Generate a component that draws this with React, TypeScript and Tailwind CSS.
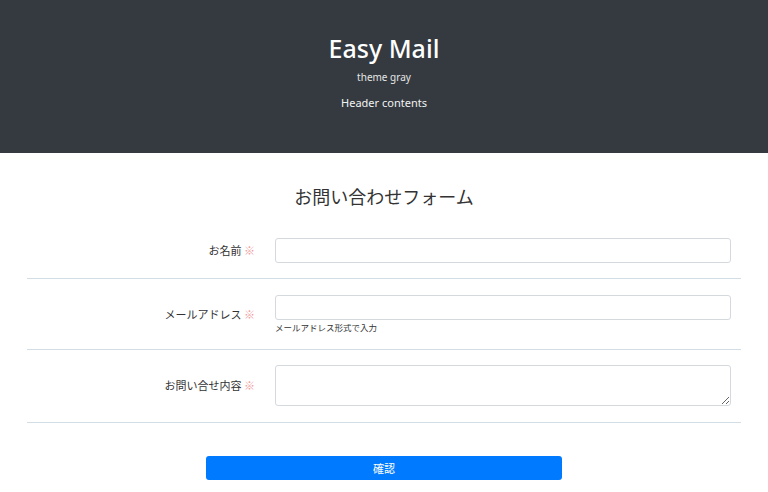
import React from 'react';

const jp = "font-['Noto_Sans_CJK_JP','Noto_Sans',sans-serif]";

interface FieldRowProps {
  label: string;
  children: React.ReactNode;
  className?: string;
}

const FieldRow: React.FC<FieldRowProps> = ({ label, children, className }) => (
  <div className={`flex items-center border-b border-[#d3dde6] ${className ?? ''}`}>
    <div className="w-1/3 pr-[10px] text-right text-[11px] text-[#333]">
      {label} <span className="text-[#f29b9b]">※</span>
    </div>
    <div className="w-2/3 px-[10px]">{children}</div>
  </div>
);

export default function App() {
  return (
    <div className={`min-h-[492px] bg-white ${jp}`}>
      <header className="h-[153px] bg-[#343a40] flex flex-col items-center text-white font-['Noto_Sans',sans-serif]">
        <h1 className="mt-[31px] text-[25px] leading-[34px] font-medium">Easy Mail</h1>
        <p className="mt-[5px] text-[10px] leading-[14px] text-[#e6e6e6]">theme gray</p>
        <p className="mt-[11px] text-[11px] leading-[16px] text-[#f2f2f2]">Header contents</p>
      </header>

      <main className="mx-[27px]">
        <h2 className="mt-[30px] text-center text-[18px] leading-[26px] text-[#333]">お問い合わせフォーム</h2>

        <form className="mt-[16px]">
          <FieldRow label="お名前" className="pt-[13px] pb-[15px]">
            <input type="text" className="block w-full h-[25px] border border-[#d4d9de] rounded-[3px] bg-white" />
          </FieldRow>

          <FieldRow label="メールアドレス" className="pt-[16px] pb-[16px]">
            <input type="email" className="block w-full h-[25px] border border-[#d4d9de] rounded-[3px] bg-white" />
            <p className="mt-[1px] text-[8.5px] leading-[12px] text-[#333] whitespace-nowrap">
              メールアドレス形式で入力
            </p>
          </FieldRow>

          <FieldRow label="お問い合せ内容" className="pt-[15px] pb-[16px]">
            <textarea className="block w-full h-[41px] border border-[#d4d9de] rounded-[3px] bg-white resize-y" />
          </FieldRow>

          <div className="flex justify-center mt-[33px]">
            <button type="button" className="w-[356px] h-[24px] bg-[#007bff] rounded-[3px] text-white text-[11px]">
              確認
            </button>
          </div>
        </form>
      </main>
    </div>
  );
}
